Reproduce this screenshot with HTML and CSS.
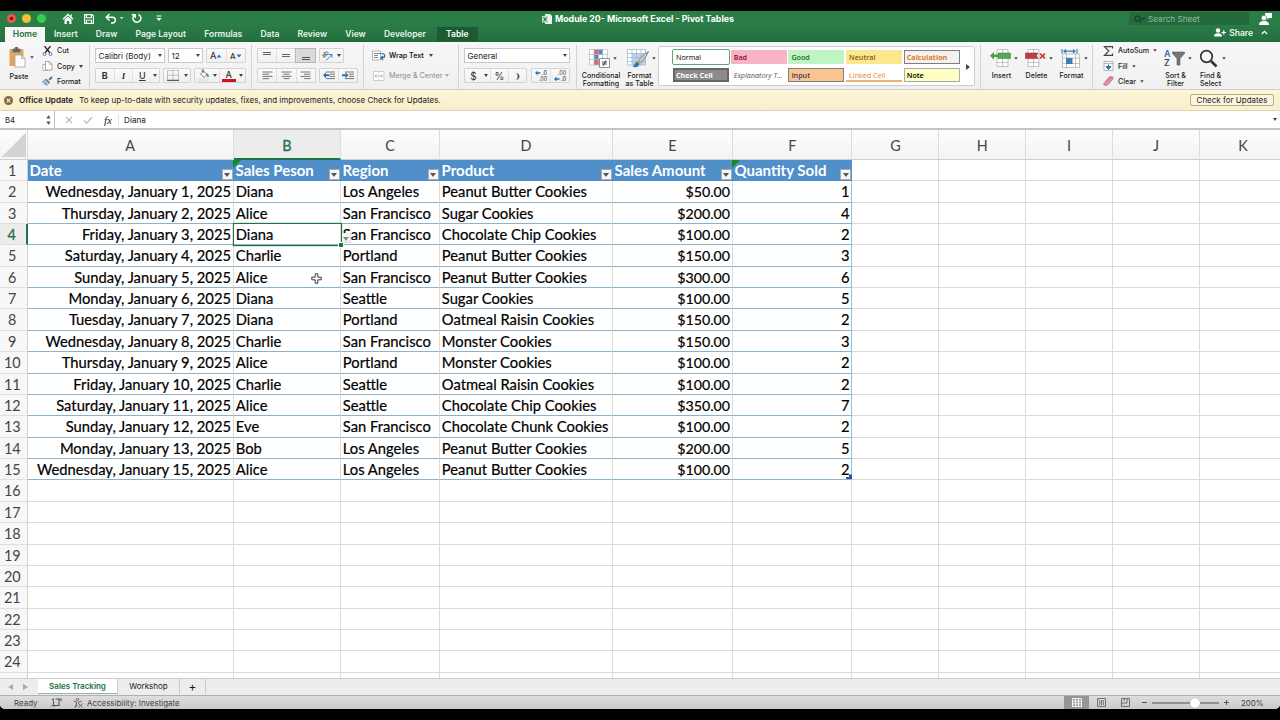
FILE: index.html
```
<!DOCTYPE html>
<html lang="en">
<head>
    <meta charset="UTF-8">
    <title>Module 20- Microsoft Excel - Pivot Tables</title>
    <link rel="stylesheet" href="styles.css">
</head>
<body>
<div class="window">
    <!-- title bar -->
    <div class="titlebar">
        <div class="lights"><i class="red"></i><i class="yellow"></i><i class="green"></i></div>
        <div class="quick">
            <svg width="12" height="12" viewBox="0 0 12 12"><path d="M1 6.2 6 1.5l5 4.7M9.3 1.5v2" fill="none" stroke="#fff" stroke-width="1.3"/><path d="M2.5 6.6 6 3.4l3.5 3.2V11H7.2V8H4.8v3H2.5z" fill="#fff"/></svg>
            <svg width="10" height="10" viewBox="0 0 10 10"><path d="M.6.6h7.4l1.4 1.4v7.4H.6zM2.4.8v3h5v-3M2.4 9.2V6.2h5.2v3" fill="none" stroke="#fff" stroke-width="1.1"/></svg>
            <svg width="20" height="11" viewBox="0 0 20 11"><path d="M4.5 1 1.2 4.2l3.3 3.2M1.4 4.2h6a2.9 2.9 0 0 1 0 5.8H6" fill="none" stroke="#fff" stroke-width="1.4"/><path d="M15 4h3.400l-1.700 2.200z" fill="#d5e8db"/></svg>
            <svg width="12" height="11" viewBox="0 0 12 11"><path d="M7.500 1.500a4 4 0 1 1-4.300.8M.8 1.700h3.400V5" fill="none" stroke="#fff" stroke-width="1.4"/></svg>
            <svg class="more" width="6" height="7" viewBox="0 0 6 7"><path d="M.5 1h5" stroke="#fff"/><path d="M.4 3h5.2L3 6z" fill="#fff"/></svg>
        </div>
        <div class="doc-title">
            <svg width="10" height="10" viewBox="0 0 10 10"><path d="M3 0h5l2 2v8H3z" fill="#e6f2ea"/><path d="M0 2h6v6.500H0z" fill="#bcdcc8"/><path d="m1.500 3.300 3 4m0-4-3 4" stroke="#1f6b3d"/></svg>
            <span>Module 20- Microsoft Excel - Pivot Tables</span>
        </div>
        <div class="search">
            <svg width="11" height="8" viewBox="0 0 11 8"><circle cx="3.500" cy="3.500" r="2.500" fill="none" stroke="#0f3d20" stroke-width="1.100"/><path d="m5.500 5.500 2 2M7.500 2.800 9 4.300l1.500-1.500" fill="none" stroke="#0f3d20" stroke-width="1.100"/></svg>
            <span>Search Sheet</span>
        </div>
        <svg class="user" width="13" height="12" viewBox="0 0 13 12"><path d="M6 0h7v5h-3L8.500 6.500V5H6z" fill="#fff"/><circle cx="5" cy="5" r="2.700" fill="#fff" stroke="#2a7a46" stroke-width=".6"/><path d="M0 12c0-3 2-4 5-4s5 1 5 4z" fill="#fff"/></svg>
    </div>
    <div class="tabs">
        <span class="tab active">Home</span>
        <span class="tab">Insert</span>
        <span class="tab">Draw</span>
        <span class="tab">Page Layout</span>
        <span class="tab">Formulas</span>
        <span class="tab">Data</span>
        <span class="tab">Review</span>
        <span class="tab">View</span>
        <span class="tab">Developer</span>
        <span class="tab table">Table</span>
        <div class="share">
            <svg width="12" height="9" viewBox="0 0 12 9"><circle cx="4" cy="2.500" r="2.200" fill="#fff"/><path d="M0 8.500C0 6 1.500 5.200 4 5.200s4 .8 4 3.300z" fill="#fff"/><path d="M7.500 4.500h4.500M9.800 2.300v4.500" stroke="#fff" stroke-width="1.200"/></svg>
            <span>Share</span>
            <svg width="7" height="5" viewBox="0 0 7 5"><path d="m.8 4 2.700-2.700L6.200 4" fill="none" stroke="#fff" stroke-width="1.200"/></svg>
        </div>
    </div>

    <!-- ribbon -->
    <div class="ribbon">
        <div class="group clipboard">
            <div class="paste">
                <div class="big-icon">
                    <svg width="18" height="21" viewBox="0 0 18 21"><rect x=".5" y="2" width="14" height="17" rx="1" fill="#dda763"/><path d="M3.500 1.800h2a2 2 0 0 1 4 0h2v3.400h-8z" fill="#666"/><path d="M6 8h6.500l3.500 3.500V20H6z" fill="#fff" stroke="#999" stroke-width=".7"/><path d="M12.500 8v3.500H16" fill="none" stroke="#999" stroke-width=".7"/></svg>
                    <i class="arrow"></i>
                </div>
                <span>Paste</span>
            </div>
            <div class="small-list">
                <div><svg width="10" height="10" viewBox="0 0 10 10"><path d="m2 0 5.500 7M8 0 2.500 7" stroke="#222" stroke-width="1.300"/><circle cx="2" cy="8" r="1.500" fill="none" stroke="#4a86bd"/><circle cx="8" cy="8" r="1.500" fill="none" stroke="#4a86bd"/></svg><span>Cut</span></div>
                <div><svg width="10" height="11" viewBox="0 0 10 11"><path d="M.5 3.500h5v6h-5z" fill="#fff" stroke="#999" stroke-width=".7"/><path d="M3 .5h4l2.500 2.500v6H3z" fill="#fff" stroke="#888" stroke-width=".7"/><path d="M6.800.5v2.700h2.700" fill="none" stroke="#888" stroke-width=".6"/></svg><span>Copy</span><i class="arrow"></i></div>
                <div><svg width="11" height="10" viewBox="0 0 11 10"><path d="m6.500 3 3-2.800 1.300 1.500-3 2.700z" fill="#4d759b"/><path d="m4.200 2.500 4 4-1.200 1-4-4z" fill="#777"/><path d="M3 3.800 6.800 7.500 4.500 9.500.3 6z" fill="#c9d5df" stroke="#5f7f9b" stroke-width=".6"/><path d="m1.500 5.500 3.500 3" stroke="#4d8dc2"/></svg><span>Format</span></div>
            </div>
        </div>

        <div class="group rows font-group">
            <div class="line">
                <div class="select name">Calibri (Body)<i class="arrow"></i></div>
                <div class="select size">12<i class="arrow"></i></div>
                <div class="btns grow"><b class="thin">A<svg width="6" height="4" viewBox="0 0 6 4"><path d="M.5 3.500 3 .5l2.500 3z" fill="#2d72b5"/></svg></b><b class="thin small">A<svg width="6" height="4" viewBox="0 0 6 4"><path d="M.5.5h5L3 3.500z" fill="#2d72b5"/></svg></b></div>
            </div>
            <div class="line">
                <div class="btns biu"><b>B</b><b class="it">I</b><b class="un">U</b><b class="dd"><i class="arrow"></i></b></div>
                <div class="btns bord"><b><svg width="12" height="11" viewBox="0 0 12 11"><path d="M.5.500h11v9.500M.500.500v9.500M6 .5v9.500M.5 5.200h11" fill="none" stroke="#aaa" stroke-width=".7"/><path d="M0 10.300h12" stroke="#333"/></svg></b><b class="dd"><i class="arrow"></i></b></div>
                <div class="btns fillc"><b><svg width="13" height="13" viewBox="0 0 13 13"><path d="m3.500 5 3-3 3.500 3.500-3 3z" fill="#fff" stroke="#555" stroke-width=".8"/><path d="M5 3V.8h1.500v3" fill="none" stroke="#555" stroke-width=".7"/><path d="M9.500 4.500c1.500.5 2 1.500 1.500 3.500z" fill="#3b7fc0" stroke="#3b7fc0"/><path d="M1 10h10v2H1z" fill="#eee" stroke="#ccc" stroke-width=".5"/></svg></b><b class="dd"><i class="arrow"></i></b><b class="redline">A</b><b class="dd"><i class="arrow"></i></b></div>
            </div>
        </div>

        <div class="group rows align-group">
            <div class="line">
                <div class="btns three">
                    <b><svg width="10" height="10" viewBox="0 0 10 10"><path d="M1 1.500h8M1 3.500h8" stroke="#555" stroke-width=".9"/></svg></b>
                    <b><svg width="10" height="10" viewBox="0 0 10 10"><path d="M1 3.500h8M1 5.500h8" stroke="#555" stroke-width=".9"/></svg></b>
                    <b class="on"><svg width="10" height="10" viewBox="0 0 10 10"><path d="M1 6.500h8M1 8.500h8" stroke="#444" stroke-width=".9"/></svg></b>
                </div>
                <div class="btns orient"><b><svg width="13" height="13" viewBox="0 0 13 13"><text x="2.500" y="9" font-size="6.500" font-weight="400" font-family="Inter" transform="rotate(-42 3 9)" fill="#333">ab</text><path d="m5 11.500 5.500-5.500M8 5.500h3v3" fill="none" stroke="#3b7fc0"/></svg></b><b class="dd"><i class="arrow"></i></b></div>
            </div>
            <div class="line">
                <div class="btns three">
                    <b><svg width="11" height="9" viewBox="0 0 11 9"><path d="M.5 1h10M.5 3.200h6.500M.5 5.400h10M.5 7.600h6.500" stroke="#666" stroke-width=".9"/></svg></b>
                    <b><svg width="11" height="9" viewBox="0 0 11 9"><path d="M.5 1h10M2.500 3.200h6M.5 5.400h10M2.500 7.600h6" stroke="#666" stroke-width=".9"/></svg></b>
                    <b><svg width="11" height="9" viewBox="0 0 11 9"><path d="M.5 1h10M4 3.200h6.500M.5 5.400h10M4 7.600h6.500" stroke="#666" stroke-width=".9"/></svg></b>
                </div>
                <div class="btns two">
                    <b><svg width="12" height="9" viewBox="0 0 12 9"><path d="M3 1h9M7 3.200h5M7 5.400h5M3 7.600h9" stroke="#666" stroke-width=".9"/><path d="M0 4.300 3 1.300v2h3.500v2H3v2z" fill="#2d72b5"/></svg></b>
                    <b><svg width="12" height="9" viewBox="0 0 12 9"><path d="M3 1h9M7 3.200h5M7 5.400h5M3 7.600h9" stroke="#666" stroke-width=".9"/><path d="m6.500 4.300-3-3v2H0v2h3.500v2z" fill="#2d72b5"/></svg></b>
                </div>
            </div>
        </div>

        <div class="group rows wrap-group">
            <div class="line"><svg width="14" height="11" viewBox="0 0 14 11"><path d="M.5 1h8v9h-8z" fill="#fff" stroke="#999" stroke-width=".7"/><path d="M2 3.500h8M2 5.500h4M2 7.500h4" stroke="#666" stroke-width=".8"/><path d="M10 3.500c4 .5 3.500 4.500-.5 4.500M11 6 8.800 8l2.200 2" fill="none" stroke="#2d72b5" stroke-width="1.200"/></svg><span class="strong">Wrap Text</span><i class="arrow"></i></div>
            <div class="line off"><svg width="14" height="10" viewBox="0 0 14 10"><path d="M1.500.5h10.500v9H1.500zM6.800.5v2M6.800 7.500v2" fill="#fff" stroke="#bbb" stroke-width=".7"/><path d="M3 5h7.500M4.500 3.500 3 5l1.500 1.500M9 3.500 10.500 5 9 6.500" fill="none" stroke="#8fa9c2" stroke-width=".8"/></svg><span>Merge &amp; Center</span><i class="arrow"></i></div>
        </div>

        <div class="group rows number-group">
            <div class="line"><div class="select general">General<i class="arrow"></i></div></div>
            <div class="line">
                <div class="btns money"><b>$</b><b class="dd"><i class="arrow"></i></b><b>%</b><b class="comma">❩</b></div>
                <div class="btns dec">
                    <b><svg width="13" height="6" viewBox="0 0 13 6"><path d="M0 3 2.600.5V2.200h2.900v1.600H2.600v1.700z" fill="#2d72b5"/><text x="7" y="5.200" font-size="5.500" font-weight="400" font-family="Inter">.0</text></svg><em>.00</em></b>
                    <b><em>.00</em><svg width="13" height="6" viewBox="0 0 13 6"><path d="M0 3 2.600.5V2.200h2.900v1.600H2.600v1.700z" fill="#2d72b5"/><text x="7" y="5.200" font-size="5.500" font-weight="400" font-family="Inter">.0</text></svg></b>
                </div>
            </div>
        </div>

        <div class="group styles-group">
            <div class="big cond">
                <div class="big-icon"><svg width="21" height="19" viewBox="0 0 21 19"><path d="M.5.500h18v15.500H.5z" fill="#fff"/><path d="M5 .5h8.500v5H5z" fill="#d56a6c"/><path d="M5 5.500h4.500v5H5z" fill="#4f8bc5"/><path d="M5 10.500h8.500V16H5z" fill="#d56a6c"/><path d="M9.500.500h4v5h-4z" fill="#5189c0"/><path d="M.5.500h18v15.500H.5zM.5 5.500h18M.5 10.500h18M5 .5V16M9.500.5V16M13.500.5V16" fill="none" stroke="#aeb8c2" stroke-width=".7"/><path d="M10.500 9.500h10v9h-10z" fill="#fff" stroke="#777" stroke-width=".8"/><path d="M13 13h5M13 15h5M17 11.500 14 17" stroke="#222" stroke-width=".8"/></svg><i class="arrow"></i></div>
                <span>Conditional<br>Formatting</span>
            </div>
            <div class="big fat">
                <div class="big-icon"><svg width="22" height="19" viewBox="0 0 22 19"><path d="M.5.500h18v15.500H.5z" fill="#fff"/><path d="M5 4.500h13.500V16H5z" fill="#b9d7ef"/><path d="M.5.500h18v15.500H.5zM.5 4.500h18M.5 8.500h18M.5 12.500h18M5 .5V16M9.500.5V16M14 .5V16" fill="none" stroke="#9db2c4" stroke-width=".7"/><path d="M21.500 2.500c-4 2-8 6-10 9l2 2c3-2.500 6.500-6.500 8-11z" fill="#c9c9c9" stroke="#666" stroke-width=".7"/><path d="m11.500 11.500 2 2-1.500 1.500-2-2z" fill="#e2a44e"/><path d="M10.500 13c-3 0-2.500 3-5 4.500 3.500 1.500 6.500.5 7-2.500z" fill="#3974aa"/></svg><i class="arrow"></i></div>
                <span>Format<br>as Table</span>
            </div>
            <div class="gallery">
                <div class="swatches">
                    <span class="sw normal">Normal</span>
                    <span class="sw bad">Bad</span>
                    <span class="sw good">Good</span>
                    <span class="sw neutral">Neutral</span>
                    <span class="sw calc">Calculation</span>
                    <span class="sw check">Check Cell</span>
                    <span class="sw expl">Explanatory T...</span>
                    <span class="sw input">Input</span>
                    <span class="sw linked">Linked Cell</span>
                    <span class="sw note">Note</span>
                </div>
                <i class="right"></i>
            </div>
        </div>

        <div class="group cells-group">
            <div class="big">
                <div class="big-icon"><svg width="21" height="18" viewBox="0 0 21 18"><path d="M7 .5h11v17H7zM12.500.5v17M7 13.500h11" fill="#fff" stroke="#aaa" stroke-width=".7"/><path d="M8 4h12.500v5.500H8z" fill="#58a55c" stroke="#3f8a45" stroke-width=".6"/><path d="M0 6.800 4 3v2.500h4v2.600H4v2.600z" fill="#46a04b"/></svg><i class="arrow"></i></div>
                <span>Insert</span>
            </div>
            <div class="big">
                <div class="big-icon"><svg width="21" height="18" viewBox="0 0 21 18"><path d="M3 .5h11v17H3zM8.500.5v17M3 13.500h11" fill="#fff" stroke="#aaa" stroke-width=".7"/><path d="M.5 4h12.500l-1.500 2.700L13 9.500H.5z" fill="#bf3f49" stroke="#9e2c37" stroke-width=".6"/><path d="m15 4.500 5 5m0-5-5 5" stroke="#c4303b" stroke-width="1.700"/></svg><i class="arrow"></i></div>
                <span>Delete</span>
            </div>
            <div class="big">
                <div class="big-icon"><svg width="21" height="19" viewBox="0 0 21 19"><path d="M2.500 5h17v13.500h-17zM6.500 5v13.500M15.500 5v13.500M2.500 9h17M2.500 14.500h17" fill="#fff" stroke="#aaa" stroke-width=".7"/><path d="M6 9h6.500v6H6z" fill="#3a7dbf"/><path d="M2 0v4.500M17 0v4.500M4 2.200h11M6 .5 4 2.200 6 4M13 .5l2 1.700L13 4" fill="none" stroke="#3a7dbf" stroke-width="1.200"/></svg><i class="arrow"></i></div>
                <span>Format</span>
            </div>
        </div>

        <div class="group edit-group">
            <div class="small-list">
                <div><svg width="10" height="10" viewBox="0 0 10 10"><path d="M9 2.500V.7H1L5.300 5 1 9.300h8V7.500" fill="none" stroke="#444" stroke-width="1.200"/></svg><span>AutoSum</span><i class="arrow"></i></div>
                <div><svg width="10" height="10" viewBox="0 0 10 10"><path d="M.5.500h9v9h-9zM.5 2.500h9" fill="#fff" stroke="#999" stroke-width=".7"/><path d="M5 3.300v2M2.500 5.500h5L5 8.500z" fill="#2d72b5" stroke="#2d72b5"/></svg><span>Fill</span><i class="arrow"></i></div>
                <div><svg width="11" height="10" viewBox="0 0 11 10"><path d="M6.500.8h3q1.200.5.5 2L5 8.500q-.5.700-1.500.700H1.500Q0 8.500 1 7z" fill="#df7d99" stroke="#b4506e" stroke-width=".6"/><path d="M1 7h3.200L10 1.500" fill="none" stroke="#f3b6c6" stroke-width=".8"/></svg><span>Clear</span><i class="arrow"></i></div>
            </div>
            <div class="big sort">
                <div class="big-icon"><svg width="21" height="18" viewBox="0 0 21 18"><text x="0" y="8" font-size="9" font-weight="600" font-family="Inter" fill="#2d72b5">A</text><text x="0" y="17" font-size="9" font-weight="500" font-family="Inter" fill="#444">Z</text><path d="M8.500 3h12v1.500L16 9.500V16h-3V9.500L8.500 4.500z" fill="#777" stroke="#555" stroke-width=".6"/></svg><i class="arrow"></i></div>
                <span>Sort &amp;<br>Filter</span>
            </div>
            <div class="big">
                <div class="big-icon"><svg width="20" height="19" viewBox="0 0 20 19"><circle cx="7.500" cy="7.500" r="5.800" fill="#f5f8fa" stroke="#333" stroke-width="1.700"/><path d="m12 12 5.500 5.500" stroke="#333" stroke-width="2.600"/></svg><i class="arrow"></i></div>
                <span>Find &amp;<br>Select</span>
            </div>
        </div>
    </div>

    <!-- update message -->
    <div class="update">
        <svg width="9" height="9" viewBox="0 0 9 9"><circle cx="4.500" cy="4.500" r="4.500" fill="#7f6a45"/><path d="m2.700 2.700 3.600 3.600m0-3.600L2.700 6.300" stroke="#fff5d8" stroke-width="1.100"/></svg>
        <strong>Office Update</strong>
        <span>To keep up-to-date with security updates, fixes, and improvements, choose Check for Updates.</span>
        <button>Check for Updates</button>
    </div>

    <!-- formula bar -->
    <div class="formula">
        <div class="namebox">B4<svg width="5" height="12" viewBox="0 0 5 12"><path d="M.3 4.500 2.500 1l2.200 3.500zM.3 7.500h4.400L2.500 11z" fill="#555"/></svg></div>
        <svg width="8" height="8" viewBox="0 0 8 8"><path d="m1 1 6 6m0-6L1 7" stroke="#bbb" stroke-width="1.100"/></svg>
        <svg class="tick" width="10" height="8" viewBox="0 0 10 8"><path d="m1 4.500 2.700 2.700L9 1" fill="none" stroke="#bbb" stroke-width="1.200"/></svg>
        <span class="fx">fx</span>
        <span class="value">Diana</span>
        <i class="arrow"></i>
    </div>

    <!-- sheet, filled in by the script below -->
    <div class="sheet">
        <div class="cols"></div>
        <div class="body"></div>
        <div class="selection"><i></i></div>
        <div class="hint"><i class="arrow"></i></div>
        <svg class="cursor" width="11" height="11" viewBox="0 0 11 11"><path d="M4.200.8h2.600v3.400h3.400v2.600H6.800v3.400H4.200V6.800H.8V4.200h3.400z" fill="#fff" stroke="#222" stroke-width=".9"/></svg>
    </div>

    <div class="sheet-tabs">
        <i class="left"></i><i class="right"></i>
        <span class="active">Sales Tracking</span>
        <span class="other">Workshop</span>
        <span class="plus">+</span>
    </div>
    <div class="status">
        <span class="ready">Ready</span>
        <svg class="macro" width="11" height="9" viewBox="0 0 11 9"><path d="M4.500 1H10v2M8 1v6.500H3M2.500 3v4.500M.5 7.800h4M1 1.500h2M2 .5v2" fill="none" stroke="#555" stroke-width="1.100"/></svg>
        <svg width="10" height="10" viewBox="0 0 10 10"><circle cx="4.500" cy="1.500" r="1.200" fill="none" stroke="#555" stroke-width=".8"/><path d="M.8 3.200 3.500 4v2L2 9.500M8.500 3.200 5.800 4v1.500M5.500 5.500l4 4m0-4-4 4M2 9.500l2.500-2.700" fill="none" stroke="#555" stroke-width=".9"/></svg>
        <span class="access">Accessibility: Investigate</span>
        <div class="views">
            <b class="on"><svg width="10" height="9" viewBox="0 0 10 9"><path d="M.5.500h9v8h-9zM3.500.5v8M6.500.5v8M.5 3.200h9M.5 5.800h9" fill="none" stroke="#fff" stroke-width=".9"/></svg></b>
            <b><svg width="9" height="9" viewBox="0 0 9 9"><path d="M.5.500h8v8h-8zM2.700 2v5M4.500 2v5M6.300 2v5" fill="none" stroke="#666" stroke-width=".9"/></svg></b>
            <b><svg width="9" height="9" viewBox="0 0 9 9"><path d="M.5.500h8v8h-8zM.5 5h5.500V.5M3.200.5V3" fill="none" stroke="#666" stroke-width=".9"/></svg></b>
        </div>
        <div class="zoom"><u></u><div class="track"><i class="knob"></i></div><u class="add"></u></div>
        <span class="percent">200%</span>
    </div>
</div>
<script>
    var letters = ['A','B','C','D','E','F','G','H','I','J','K'];
    var heads = ['Date','Sales Peson','Region','Product','Sales Amount','Quantity Sold'];
    var data = [
        ['Wednesday, January 1, 2025','Diana','Los Angeles','Peanut Butter Cookies','$50.00','1'],
        ['Thursday, January 2, 2025','Alice','San Francisco','Sugar Cookies','$200.00','4'],
        ['Friday, January 3, 2025','Diana','San Francisco','Chocolate Chip Cookies','$100.00','2'],
        ['Saturday, January 4, 2025','Charlie','Portland','Peanut Butter Cookies','$150.00','3'],
        ['Sunday, January 5, 2025','Alice','San Francisco','Peanut Butter Cookies','$300.00','6'],
        ['Monday, January 6, 2025','Diana','Seattle','Sugar Cookies','$100.00','5'],
        ['Tuesday, January 7, 2025','Diana','Portland','Oatmeal Raisin Cookies','$150.00','2'],
        ['Wednesday, January 8, 2025','Charlie','San Francisco','Monster Cookies','$150.00','3'],
        ['Thursday, January 9, 2025','Alice','Portland','Monster Cookies','$100.00','2'],
        ['Friday, January 10, 2025','Charlie','Seattle','Oatmeal Raisin Cookies','$100.00','2'],
        ['Saturday, January 11, 2025','Alice','Seattle','Chocolate Chip Cookies','$350.00','7'],
        ['Sunday, January 12, 2025','Eve','San Francisco','Chocolate Chunk Cookies','$100.00','2'],
        ['Monday, January 13, 2025','Bob','Los Angeles','Peanut Butter Cookies','$200.00','5'],
        ['Wednesday, January 15, 2025','Alice','Los Angeles','Peanut Butter Cookies','$100.00','2']
    ];

    var html = '<span class="corner"></span>';
    for (var i = 0; i < letters.length; i++) {
        html += '<span class="' + (letters[i] == 'B' ? 'current' : '') + '">' + letters[i] + '</span>';
    }
    document.querySelector('.cols').innerHTML = html;

    html = '';
    for (var r = 1; r <= 25; r++) {
        var row = r == 1 ? heads : data[r - 2];
        var kind = r == 1 ? ' head' : (row ? ' data' : '');
        html += '<div class="row' + kind + '"><span class="num' + (r == 4 ? ' current' : '') + '">' + (r < 25 ? r : '') + '</span>';
        for (var c = 0; c < letters.length; c++) {
            var text = row && row[c] ? row[c] : '';
            var cls = 'cell';
            if (c < 6 && row) cls += ' in';
            if (r > 1 && (c == 0 || c > 3)) cls += ' end';
            if (r == 1 && (c == 1 || c == 5)) cls += ' flag';
            html += '<span class="' + cls + '">' + text;
            if (r == 1 && text) html += '<i class="filter"></i>';
            if (r == 15 && c == 5) html += '<i class="resize"></i>';
            html += '</span>';
        }
        html += '</div>';
    }
    document.querySelector('.body').innerHTML = html;
</script>
</body>
</html>
```
FILE: styles.css
```
*{
    margin:0;
    padding:0;
    box-sizing:border-box;
}
body{
    width:1280px;
    height:720px;
    background:#000;
    overflow:hidden;
    padding-top:11px;
    font-family:Inter, "Liberation Sans", sans-serif;
    font-size:7.5px;
    color:#1c1c1c;
}
svg{
    flex:none;
    display:block;
}
i, em{
    font-style:normal;
}
.window{
    height:698px;
    display:flex;
    flex-direction:column;
    overflow:hidden;
    border-radius:0 0 5px 5px;
    background:#fff;
}
.arrow{
    flex:none;
    width:0;
    height:0;
    border-left:2px solid transparent;
    border-right:2px solid transparent;
    border-top:3px solid #444;
}

/* title bar */
.titlebar{
    flex:none;
    height:15px;
    display:flex;
    align-items:center;
    background:#2b7d48;
    color:#fff;
}
.lights{
    width:62px;
    padding-left:7px;
    display:flex;
    gap:6px;
}
.lights i{
    width:9px;
    height:9px;
    border-radius:50%;
}
.lights .red{
    background:radial-gradient(#7a1410 20%, #f2554d 35%);
}
.lights .yellow{
    background:#f6bd3b;
}
.lights .green{
    background:#35cd4b;
}
.quick{
    width:480px;
    display:flex;
    align-items:center;
    gap:10px;
}
.quick svg:nth-child(3){
    margin-left:1px;
}
.quick svg:nth-child(4){
    margin-left:-4px;
}
.quick .more{
    margin-left:3px;
}
.doc-title{
    width:587px;
    display:flex;
    align-items:center;
    gap:3px;
    font-size:8.8px;
    font-weight:700;
}
.search{
    width:120px;
    height:13px;
    padding-left:5px;
    display:flex;
    align-items:center;
    gap:3px;
    background:#246a3d;
    color:#8fbc9e;
    font-size:8.2px;
}
.user{
    margin-left:10px;
}
.tabs{
    flex:none;
    height:16px;
    padding:1px 9px 0 5px;
    display:flex;
    background:linear-gradient(#2a7a46, #247040);
    border-bottom:1px solid #1f6739;
    font-size:8.5px;
    font-weight:600;
    color:#e8f3ec;
}
.tab{
    padding:0 9.1px;
    line-height:15px;
}
.tab.active{
    padding:0 7.8px;
    background:#f6f6f6;
    color:#217346;
    height:15px;
}
.tab.table{
    margin-left:2px;
    background:#1b5a32;
    color:#fff;
}
.share{
    margin-left:auto;
    display:flex;
    align-items:center;
    gap:3px;
    height:11px;
}
.share svg:last-child{
    margin:0 3px 0 5px;
}

/* ribbon */
.ribbon{
    flex:none;
    height:48px;
    display:grid;
    grid-template-columns:90px 162px 112px 95px 118px 404px 112px 1fr;
    background:linear-gradient(#f7f7f7, #f0f0f0);
    border-bottom:1px solid #d0d0d0;
    font-size:7.1px;
    font-weight:500;
}
.group{
    position:relative;
    display:flex;
    margin:3px 0;
    border-right:1px solid #d4d4d4;
}
.group:last-child{
    border-right:0;
}
.clipboard .paste{
    width:42px;
    padding-top:1px;
    padding-right:4px;
    display:flex;
    flex-direction:column;
    align-items:center;
    gap:4px;
}
.big-icon{
    height:22px;
    display:flex;
    align-items:center;
    gap:3px;
}
.big-icon .arrow{
    margin-right:-4px;
}
.big-icon .arrow, .edit-group .arrow{
    transform:scale(.85);
}
.small-list{
    display:flex;
    flex-direction:column;
}
.small-list div{
    height:15.4px;
    display:flex;
    align-items:center;
    gap:4px;
}
.small-list svg{
    width:11px;
}
.clipboard .small-list{
    margin-top:-2px;
}
.rows{
    padding:3px 5px;
    flex-direction:column;
    gap:5px;
}
.line{
    height:15px;
    display:flex;
    gap:3px;
}
.select{
    height:15px;
    padding:0 2.5px;
    display:flex;
    align-items:center;
    justify-content:space-between;
    border:1px solid #c8c8c8;
    background:#fff;
    font-size:8.1px;
    font-weight:400;
}
.name{
    width:70px;
}
.size{
    width:35px;
}
.general{
    width:106px;
}
.btns{
    height:15px;
    display:flex;
    border:1px solid #d3d3d3;
    border-radius:1px;
    background:linear-gradient(#fafafa, #f1f1f1);
}
.btns b{
    flex:1;
    display:flex;
    align-items:center;
    justify-content:center;
    border-left:1px solid #e0e0e0;
    font-size:9px;
    font-weight:700;
    color:#333;
}
.btns b:first-child{
    border-left:0;
}
.btns .dd{
    flex:0 0 8px;
    border-left:0;
}
.btns .on{
    background:#dadada;
    outline:1px solid #b5b5b5;
}
.grow{
    width:40px;
}
.btns .thin{
    font-weight:500;
}
.btns .small{
    font-size:8px;
}
.biu{
    width:66px;
}
.btns .it{
    font-family:"Liberation Serif", serif;
    font-style:italic;
}
.btns .un{
    font-weight:500;
    text-decoration:underline;
}
.bord{
    width:28px;
}
.fillc{
    width:53px;
}
.btns .redline{
    position:relative;
    font-weight:500;
    padding-bottom:3px;
}
.redline:after{
    content:"";
    position:absolute;
    left:2px;
    right:1px;
    bottom:0;
    height:3px;
    background:#c8151f;
}
.three{
    width:59px;
}
.orient{
    width:25px;
}
.two{
    width:39px;
}
.wrap-group{
    padding-left:8px;
    white-space:nowrap;
}
.wrap-group .line{
    align-items:center;
}
.strong{
    font-weight:600;
}
.wrap-group .arrow{
    margin-left:2px;
}
.off{
    font-size:7.2px;
    font-weight:400;
    color:#8c8c8c;
}
.off .arrow{
    margin-left:0;
    border-top-color:#aaa;
}
.money{
    width:63px;
}
.btns.money b{
    font-weight:400;
    font-size:10px;
}
.btns.money .comma{
    font-size:8px;
}
.number-group .line{
    gap:4px;
}
.dec{
    width:39px;
}
.btns.dec b{
    flex-direction:column;
    align-items:center;
}
.dec em{
    font-size:5.5px;
    line-height:6px;
    font-weight:400;
    padding-left:4px;
}
.big{
    width:35px;
    padding-top:3px;
    display:flex;
    flex-direction:column;
    align-items:center;
    text-align:center;
    line-height:8px;
    gap:4px;
    white-space:nowrap;
}
.big .big-icon{
    height:20px;
}
.styles-group{
    padding-left:4px;
}
.cond{
    width:40px;
}
.fat{
    width:37px;
}
.gallery{
    width:317px;
    height:40px;
    margin-top:1px;
    padding:2px 4px 0 14px;
    display:flex;
    align-items:center;
    justify-content:space-between;
    border:1px solid #cfcfcf;
    border-radius:2px;
    background:#fff;
}
.swatches{
    height:36px;
    display:grid;
    grid-template-columns:repeat(5, 56px);
    grid-auto-rows:14px;
    gap:4px 1.7px;
    padding-top:1px;
}
.sw{
    padding-left:3px;
    line-height:14px;
    font-family:"Open Sans", "Noto Sans", sans-serif;
    font-size:7.2px;
    font-weight:600;
    white-space:nowrap;
}
.calc, .check, .input, .note{
    padding-left:2px;
    line-height:12px;
    border:1px solid #7f7f7f;
}
.normal{
    outline:1px solid #5fa67b;
    border-radius:1px;
    font-weight:500;
    color:#000;
}
.bad{
    background:#f8b4c4;
    color:#8f0d2a;
}
.good{
    background:#bff5c3;
    color:#1b6a25;
}
.neutral{
    background:#fbe88e;
    color:#8b5a0c;
}
.calc{
    background:#f2f2f2;
    color:#df7a20;
    font-weight:700;
}
.check{
    background:#8b8b8b;
    border:2px solid #666;
    line-height:10px;
    padding-left:1px;
    color:#fff;
    font-weight:700;
}
.expl{
    font-style:italic;
    font-weight:400;
    color:#555;
}
.input{
    background:#f9c48f;
    color:#3f3f64;
}
.linked{
    color:#df8338;
    font-weight:500;
    border-bottom:2px solid #eeb077;
}
.note{
    background:#ffffc5;
    color:#000;
    border-color:#aaa;
}
.right{
    border-top:3px solid transparent;
    border-bottom:3px solid transparent;
    border-left:4px solid #444;
}
.cells-group{
    padding-left:3px;
}
.edit-group{
    padding-left:10px;
}
.edit-group .small-list{
    width:55px;
    margin-top:-2px;
}

/* update message */
.update{
    flex:none;
    height:21px;
    padding:0 6px 0 4px;
    display:flex;
    align-items:center;
    gap:6px;
    background:linear-gradient(#fdf4d7, #f8efcc);
    border-bottom:1px solid #d9d3bb;
    font-size:8px;
}
.update strong{
    font-size:8.1px;
    font-weight:600;
}
.update button{
    width:84px;
    height:12px;
    margin-left:auto;
    border:1px solid #b3ab90;
    border-radius:2px;
    background:#fdf6de;
    font:8px Inter, sans-serif;
    color:#222;
}

/* formula bar */
.formula{
    flex:none;
    height:19px;
    padding-right:3px;
    display:flex;
    align-items:center;
    border-bottom:2px solid #c3c3c3;
    background:#fff;
    font-size:8.2px;
}
.namebox{
    width:55px;
    height:17px;
    margin-right:10px;
    padding:0 3px 0 5px;
    display:flex;
    align-items:center;
    justify-content:space-between;
    border-right:1px solid #c3c3c3;
    font-size:7.8px;
}
.tick{
    margin-left:10px;
}
.fx{
    width:15px;
    margin-left:11px;
    border-right:1px solid #e3e3e3;
    font:italic 11px/12px "Liberation Serif", serif;
}
.value{
    margin-left:5px;
}
.formula > .arrow{
    margin-left:auto;
}

/* sheet */
.sheet{
    position:relative;
    height:548px;
    flex:none;
    overflow:hidden;
    font-family:Lato, sans-serif;
    font-size:14.4px;
}
.cols, .row{
    display:grid;
    grid-template-columns:27.5px 206px 107px 99px 173px 120px 119.500px 87px 86.500px 87px 87px 87px;
}
.cols{
    height:29.8px;
    background:linear-gradient(#fdfdfd, #f3f3f3);
}
.cols span{
    height:29.8px;
    line-height:31px;
    text-align:center;
    color:#444;
    border-right:1px solid #dcdcdc;
    border-bottom:1px solid #cfcfcf;
}
.cols span:nth-child(n+3){
    padding-left:1px;
}
.cols .corner{
    background:linear-gradient(to bottom right, transparent 50%, #d3d3d3 50%) 2px 3px / 24px 24px no-repeat;
}
.cols .current{
    background:#ececec;
    color:#217346;
    border-bottom:2px solid #217346;
    -webkit-text-stroke:.3px #217346;
}
.row{
    height:21.39px;
    line-height:21.6px;
}
.row > span{
    height:21.39px;
}
.num{
    padding-right:2px;
    text-align:center;
    color:#444;
    background:#f7f7f7;
    border-right:1px solid #d0d0d0;
    border-bottom:1px solid #dedede;
}
.num.current{
    background:#ececec;
    color:#217346;
    border-right:2px solid #217346;
    -webkit-text-stroke:.3px #217346;
}
.cell{
    position:relative;
    padding:0 1.5px 0 2.3px;
    white-space:nowrap;
    color:#000;
    border-right:1px solid #dadada;
    border-bottom:1px solid #dadada;
}
.data .cell{
    font-size:14.75px;
    -webkit-text-stroke:.2px #000;
}
.end{
    text-align:right;
}
.data .cell:nth-child(6){
    font-size:14.2px;
}
.data .in{
    border-bottom-color:#8fb2cb;
}
.data .in:nth-child(7){
    border-right-color:#8cc3de;
}
.head .in{
    padding-left:2px;
    background:#508fca;
    border-color:#508fca;
    color:#fff;
    font-size:15px;
    font-weight:700;
}
.flag:before{
    content:"";
    position:absolute;
    left:-1px;
    top:0;
    border-top:8px solid #158a1f;
    border-right:8px solid transparent;
}
.filter{
    position:absolute;
    right:0;
    bottom:0;
    width:11px;
    height:11px;
    border:1px solid #a9a9a9;
    background:#f7f7f7;
}
.filter:after{
    content:"";
    position:absolute;
    left:1.5px;
    top:3px;
    border-left:3px solid transparent;
    border-right:3px solid transparent;
    border-top:4px solid #555;
}
.resize{
    position:absolute;
    right:-1px;
    bottom:0;
    width:6px;
    height:5px;
    background:#3551a0;
    clip-path:polygon(50% 0, 100% 0, 100% 100%, 0 100%, 0 50%, 50% 50%);
}
.selection{
    position:absolute;
    left:232.5px;
    top:93px;
    width:109px;
    height:22.5px;
    border:1.5px solid #217346;
    box-shadow:0 0 1px #217346;
}
.selection i{
    position:absolute;
    right:-2px;
    bottom:-2px;
    width:4px;
    height:4px;
    background:#217346;
    outline:1px solid #fff;
}
.hint{
    position:absolute;
    left:342px;
    top:103px;
    width:9px;
    height:10px;
    padding:4px 0 0 1px;
    background:#f4f4f4;
    border-right:1px solid #ddd;
    border-bottom:1px solid #ddd;
}
.hint .arrow{
    display:block;
    border-left-width:3px;
    border-right-width:3px;
    border-top-width:4px;
    border-top-color:#888;
}
.cursor{
    position:absolute;
    left:311px;
    top:143px;
}

/* sheet tabs and status bar */
.sheet-tabs{
    flex:none;
    height:17px;
    display:flex;
    align-items:center;
    background:#ededed;
    border-top:1px solid #cfcfcf;
    font-size:8px;
}
.sheet-tabs .left, .sheet-tabs .right{
    border-top:3.5px solid transparent;
    border-bottom:3.5px solid transparent;
}
.sheet-tabs .left{
    margin-left:8px;
    border-left:0;
    border-right:5px solid #aaa;
}
.sheet-tabs .right{
    margin-left:10px;
    border-left:5px solid #aaa;
}
.sheet-tabs span{
    height:15px;
    line-height:15px;
    margin-bottom:1px;
    text-align:center;
    border-right:1px solid #ccc;
}
.sheet-tabs .active{
    width:80px;
    margin-left:10px;
    background:#fff;
    color:#217346;
    font-weight:600;
    border-bottom:1px solid #aaa;
}
.other{
    width:62px;
}
.sheet-tabs .plus{
    width:26px;
    font-size:12px;
}
.status{
    flex:none;
    height:14px;
    display:flex;
    align-items:center;
    background:linear-gradient(#dedede, #c9c9c9);
    border-top:1px solid #b0b0b0;
    font-size:7.95px;
    color:#444;
}
.ready{
    width:37px;
    margin-left:14px;
}
.macro{
    margin-right:11px;
}
.access{
    margin-left:4px;
}
.views{
    height:14px;
    margin-left:auto;
    display:flex;
}
.views b{
    width:24px;
    display:flex;
    align-items:center;
    justify-content:center;
}
.views .on{
    width:25px;
    background:#969696;
}
.zoom{
    margin-left:5px;
    display:flex;
    align-items:center;
    gap:5px;
}
.zoom u{
    position:relative;
    width:5px;
    height:1.5px;
    background:#555;
}
.zoom .add:after{
    content:"";
    position:absolute;
    left:1.75px;
    top:-1.75px;
    width:1.5px;
    height:5px;
    background:#555;
}
.track{
    width:67px;
    height:2px;
    background:#919191;
}
.knob{
    position:relative;
    left:38px;
    top:-4px;
    display:block;
    width:10px;
    height:10px;
    border-radius:50%;
    background:#fff;
    box-shadow:0 0 1px #777;
}
.percent{
    width:39px;
    margin-left:12px;
}
```
